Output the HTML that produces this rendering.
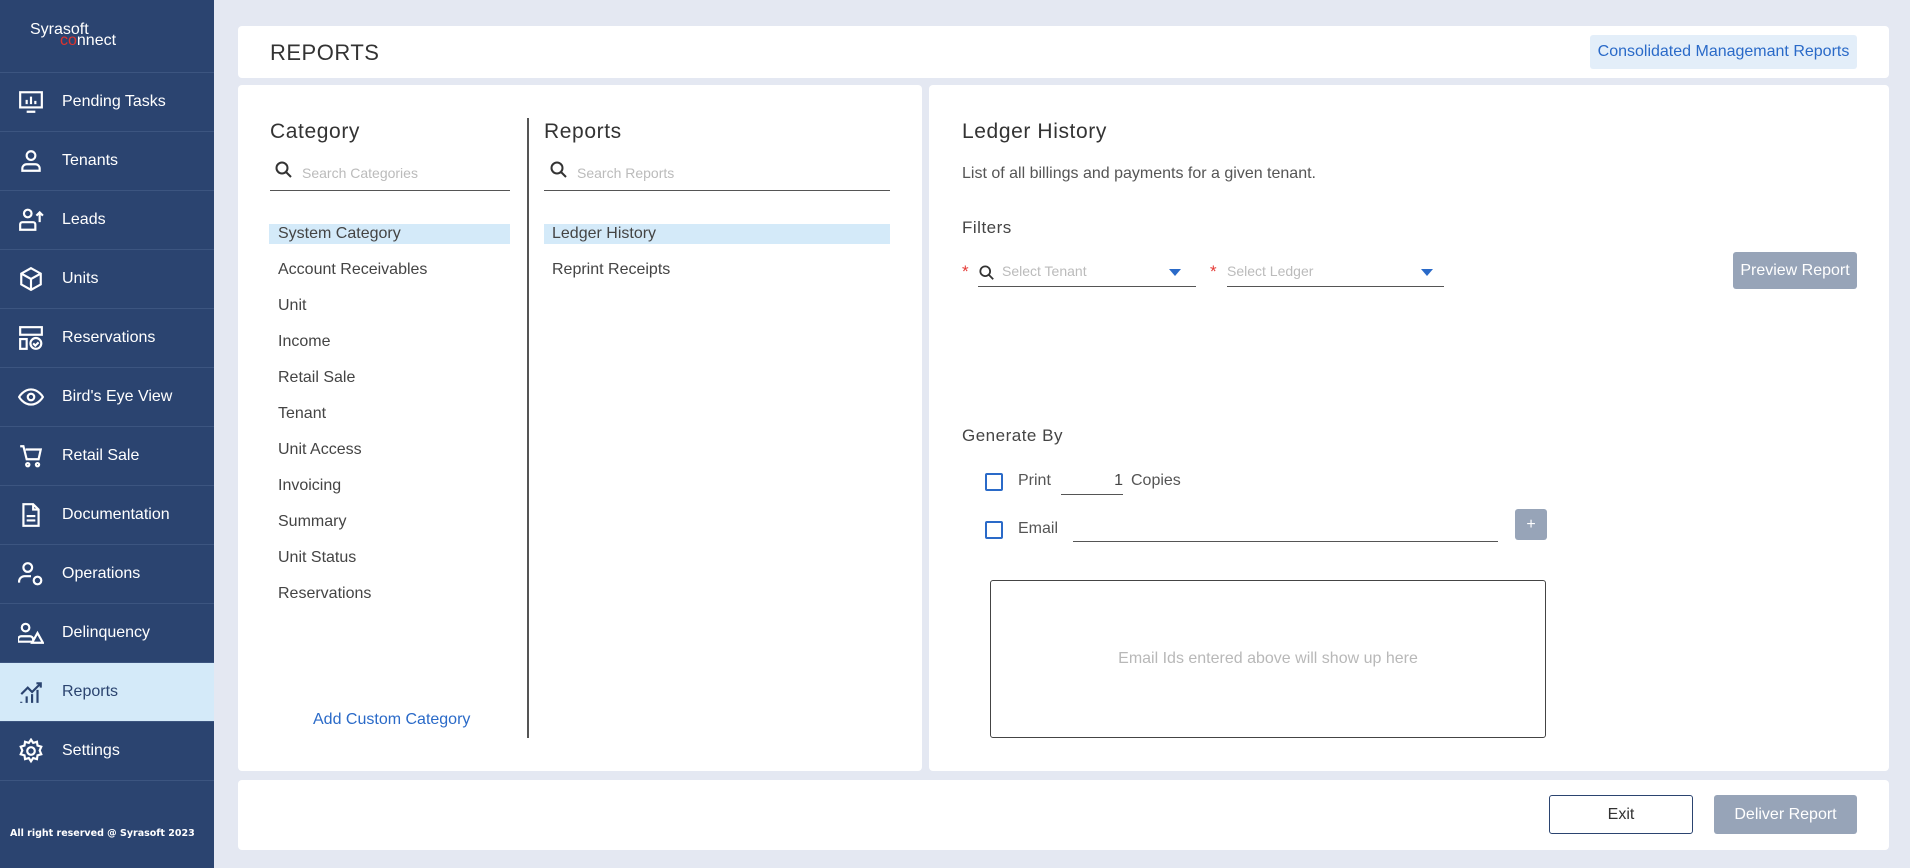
<!DOCTYPE html>
<html><head><meta charset="utf-8"><style>
*{box-sizing:border-box;margin:0;padding:0}
body{width:1910px;height:868px;background:#e4e8f2;font-family:"Liberation Sans",sans-serif;position:relative;overflow:hidden;color:#444}
.abs{position:absolute}
#side{left:0;top:0;width:214px;height:868px;background:#2b4470}
.item{position:absolute;left:0;width:214px;height:59px;border-bottom:1px solid #3c5580;color:#fff;font-size:16px;display:flex;align-items:center}
.item svg{position:absolute;left:18px;width:26px;height:26px}
.item span{position:absolute;left:62px}
.item.act{background:#d4eaf9;color:#2b4470}
.card{position:absolute;background:#fff;border-radius:4px}
.h{font-size:21px;color:#333;letter-spacing:.6px}
.li{position:absolute;font-size:16px;color:#444;height:20px;line-height:20px}
.ph{color:#bbb;font-size:14px}
.btn{position:absolute;display:flex;align-items:center;justify-content:center;font-size:16px;border-radius:3px}
.cb{position:absolute;width:18px;height:18px;border:2px solid #2a6ac8;border-radius:2px}
</style></head><body>
<div id="side" class="abs">
 <div class="abs" style="left:30px;top:22px;color:#fff;font-size:16px;line-height:16px">Syrasoft</div>
 <div class="abs" style="left:60px;top:33px;color:#fff;font-size:16px;line-height:16px"><span style="color:#e0332c">co</span>nnect</div>
 <div class="abs" style="left:0;top:72px;width:214px;border-top:1px solid #3c5580"></div>
 <div class="item" style="top:73px"><svg viewBox="0 0 24 24" fill="none" stroke="#fff" stroke-width="2"><rect x="2" y="3" width="20" height="14"/><path d="M8 14v-4M12 14V7M16 14v-3M8 21h8"/></svg><span>Pending Tasks</span></div>
 <div class="item" style="top:132px"><svg viewBox="0 0 24 24" fill="none" stroke="#fff" stroke-width="2"><circle cx="12" cy="7" r="4"/><path d="M4 21v-2a4 4 0 0 1 4-4h8a4 4 0 0 1 4 4v2z"/></svg><span>Tenants</span></div>
 <div class="item" style="top:191px"><svg viewBox="0 0 24 24" fill="none" stroke="#fff" stroke-width="2"><circle cx="9" cy="6" r="3.5"/><path d="M2 21v-5a2 2 0 0 1 2-2h10a2 2 0 0 1 2 2v5zM20 14V5M17 8l3-3 3 3"/></svg><span>Leads</span></div>
 <div class="item" style="top:250px"><svg viewBox="0 0 24 24" fill="none" stroke="#fff" stroke-width="2"><path d="M12 2l9 5v10l-9 5-9-5V7zM3 7l9 5 9-5M12 12v10"/></svg><span>Units</span></div>
 <div class="item" style="top:309px"><svg viewBox="0 0 24 24" fill="none" stroke="#fff" stroke-width="2"><rect x="2" y="2" width="20" height="7"/><rect x="2" y="13" width="6" height="9"/><circle cx="16.5" cy="17" r="5"/><path d="M14 17l2 2 3-3"/></svg><span>Reservations</span></div>
 <div class="item" style="top:368px"><svg viewBox="0 0 24 24" fill="none" stroke="#fff" stroke-width="2"><path d="M1 12s4-7 11-7 11 7 11 7-4 7-11 7S1 12 1 12z"/><circle cx="12" cy="12" r="3"/></svg><span>Bird's Eye View</span></div>
 <div class="item" style="top:427px"><svg viewBox="0 0 24 24" fill="none" stroke="#fff" stroke-width="2"><path d="M2 3h3l3 12h11l2-9H7"/><circle cx="9" cy="20" r="1.5"/><circle cx="18" cy="20" r="1.5"/></svg><span>Retail Sale</span></div>
 <div class="item" style="top:486px"><svg viewBox="0 0 24 24" fill="none" stroke="#fff" stroke-width="2"><path d="M5 2h9l5 5v15H5zM14 2v5h5M8 13h8M8 17h8"/></svg><span>Documentation</span></div>
 <div class="item" style="top:545px"><svg viewBox="0 0 24 24" fill="none" stroke="#fff" stroke-width="2"><circle cx="9" cy="6" r="4"/><path d="M1 20v-1a5 5 0 0 1 5-5h6"/><circle cx="18" cy="18" r="3.5"/></svg><span>Operations</span></div>
 <div class="item" style="top:604px"><svg viewBox="0 0 24 24" fill="none" stroke="#fff" stroke-width="2"><circle cx="7" cy="7" r="3.5"/><path d="M0 20v-2a3 3 0 0 1 3-3h8a3 3 0 0 1 3 3v2zM18 12l5 9h-10z"/></svg><span>Delinquency</span></div>
 <div class="item act" style="top:663px"><svg viewBox="0 0 24 24" fill="none" stroke="#2b4470" stroke-width="2"><path d="M3 22v-1M8 22v-6M13 22v-8M18 22V10M3 14l6-6 4 4 8-8M17 4h4v4"/></svg><span>Reports</span></div>
 <div class="item" style="top:722px"><svg viewBox="0 0 24 24" fill="none" stroke="#fff" stroke-width="2"><circle cx="12" cy="12" r="3.5"/><path d="M12 1.5l2 3 3.5-1 .5 3.5 3.5 1-1.5 3.5 1.5 3.5-3.5 1-.5 3.5-3.5-1-2 3-2-3-3.5 1-.5-3.5-3.5-1 1.5-3.5L2.5 8l3.5-1 .5-3.5 3.5 1z"/></svg><span>Settings</span></div>
 <div class="abs" style="left:10px;top:828px;color:#fff;font-size:9.5px;font-weight:bold;white-space:nowrap;font-family:'DejaVu Sans',sans-serif">All right reserved @ Syrasoft 2023</div>
</div>

<div class="card" style="left:238px;top:26px;width:1651px;height:52px">
 <div class="abs" style="left:32px;top:14px;font-size:22px;color:#333;letter-spacing:.5px">REPORTS</div>
 <div class="btn" style="left:1352px;top:9px;width:267px;height:34px;background:#e3eef9;color:#2a6ac8;font-size:16px">Consolidated Managemant Reports</div>
</div>

<div class="card" style="left:238px;top:85px;width:684px;height:686px">
 <div class="abs h" style="left:32px;top:35px">Category</div>
 <svg class="abs" style="left:37px;top:76px" width="18" height="18" viewBox="0 0 18 18" fill="none" stroke="#333" stroke-width="2"><circle cx="7" cy="7" r="5.5"/><path d="M11 11l5 5"/></svg>
 <div class="abs ph" style="left:64px;top:80px">Search Categories</div>
 <div class="abs" style="left:32px;top:105px;width:240px;height:1px;background:#555"></div>
 <div class="abs" style="left:31px;top:139px;width:241px;height:20px;background:#d4eaf9"></div>
 <div class="li" style="left:40px;top:139px">System Category</div>
 <div class="li" style="left:40px;top:175px">Account Receivables</div>
 <div class="li" style="left:40px;top:211px">Unit</div>
 <div class="li" style="left:40px;top:247px">Income</div>
 <div class="li" style="left:40px;top:283px">Retail Sale</div>
 <div class="li" style="left:40px;top:319px">Tenant</div>
 <div class="li" style="left:40px;top:355px">Unit Access</div>
 <div class="li" style="left:40px;top:391px">Invoicing</div>
 <div class="li" style="left:40px;top:427px">Summary</div>
 <div class="li" style="left:40px;top:463px">Unit Status</div>
 <div class="li" style="left:40px;top:499px">Reservations</div>
 <div class="li" style="left:75px;top:625px;color:#2a6ac8">Add Custom Category</div>
 <div class="abs" style="left:289px;top:33px;width:2px;height:620px;background:#555"></div>
 <div class="abs h" style="left:306px;top:35px">Reports</div>
 <svg class="abs" style="left:312px;top:76px" width="18" height="18" viewBox="0 0 18 18" fill="none" stroke="#333" stroke-width="2"><circle cx="7" cy="7" r="5.5"/><path d="M11 11l5 5"/></svg>
 <div class="abs ph" style="left:339px;top:80px">Search Reports</div>
 <div class="abs" style="left:306px;top:105px;width:346px;height:1px;background:#555"></div>
 <div class="abs" style="left:306px;top:139px;width:346px;height:20px;background:#d4eaf9"></div>
 <div class="li" style="left:314px;top:139px">Ledger History</div>
 <div class="li" style="left:314px;top:175px">Reprint Receipts</div>
</div>

<div class="card" style="left:929px;top:85px;width:960px;height:686px">
 <div class="abs h" style="left:33px;top:35px">Ledger History</div>
 <div class="abs" style="left:33px;top:80px;font-size:16px;color:#555">List of all billings and payments for a given tenant.</div>
 <div class="abs" style="left:33px;top:133px;font-size:17px;color:#444;letter-spacing:.5px">Filters</div>
 <div class="abs" style="left:33px;top:177px;color:#e53935;font-size:17px">*</div>
 <svg class="abs" style="left:50px;top:180px" width="16" height="16" viewBox="0 0 18 18" fill="none" stroke="#333" stroke-width="2"><circle cx="7" cy="7" r="5.5"/><path d="M11 11l5 5"/></svg>
 <div class="abs ph" style="left:73px;top:178px">Select Tenant</div>
 <svg class="abs" style="left:240px;top:184px" width="12" height="8"><path d="M0 0h12L6 7z" fill="#2a6ac8"/></svg>
 <div class="abs" style="left:49px;top:201px;width:218px;height:1px;background:#555"></div>
 <div class="abs" style="left:281px;top:177px;color:#e53935;font-size:17px">*</div>
 <div class="abs ph" style="left:298px;top:178px">Select Ledger</div>
 <svg class="abs" style="left:492px;top:184px" width="12" height="8"><path d="M0 0h12L6 7z" fill="#2a6ac8"/></svg>
 <div class="abs" style="left:298px;top:201px;width:217px;height:1px;background:#555"></div>
 <div class="btn" style="left:804px;top:167px;width:124px;height:37px;background:#97a4b8;color:#fff">Preview Report</div>
 <div class="abs" style="left:33px;top:341px;font-size:17px;color:#444;letter-spacing:.5px">Generate By</div>
 <div class="cb" style="left:56px;top:388px"></div>
 <div class="abs" style="left:89px;top:387px;font-size:16px;color:#555">Print</div>
 <div class="abs" style="left:132px;top:387px;width:62px;text-align:right;font-size:16px;color:#444">1</div>
 <div class="abs" style="left:132px;top:409px;width:62px;height:1px;background:#555"></div>
 <div class="abs" style="left:202px;top:387px;font-size:16px;color:#555">Copies</div>
 <div class="cb" style="left:56px;top:436px"></div>
 <div class="abs" style="left:89px;top:435px;font-size:16px;color:#555">Email</div>
 <div class="abs" style="left:144px;top:456px;width:425px;height:1px;background:#555"></div>
 <div class="btn" style="left:586px;top:424px;width:32px;height:31px;background:#97a4b8;color:#fff;font-size:16px">+</div>
 <div class="abs" style="left:61px;top:495px;width:556px;height:158px;border:1px solid #444;border-radius:3px;display:flex;align-items:center;justify-content:center;color:#b8b8b8;font-size:16px">Email Ids entered above will show up here</div>
</div>

<div class="card" style="left:238px;top:780px;width:1651px;height:70px">
 <div class="btn" style="left:1311px;top:15px;width:144px;height:39px;border:1px solid #2b4470;color:#333;background:#fff">Exit</div>
 <div class="btn" style="left:1476px;top:15px;width:143px;height:39px;background:#97a4b8;color:#fff">Deliver Report</div>
</div>
</body></html>
